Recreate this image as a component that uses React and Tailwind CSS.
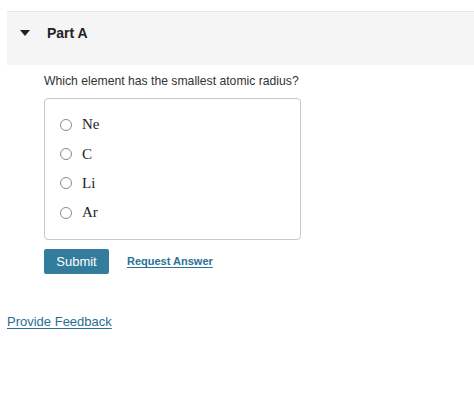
import React from "react";

const options = ["Ne", "C", "Li", "Ar"];

export default function App() {
    return (
        <div className="w-[474px] h-[420px] bg-white pt-[11px] font-['Liberation_Sans',Arial,sans-serif] text-[#222]">
            <div className="ml-[7px] h-[54px] bg-[#f5f5f5] border-t border-[#e6e6e6] flex items-start pt-[11px]">
                <div className="h-[20px] flex items-center">
                    <svg className="ml-[13px]" width="10" height="6" viewBox="0 0 10 6">
                        <path d="M0 0 L10 0 L5 6 Z" fill="#222" />
                    </svg>
                </div>
                <span className="ml-[17px] text-[14px] leading-[20px] font-bold text-[#222]">Part A</span>
            </div>
            <div className="ml-[44px]">
                <p className="mt-[7px] text-[12.2px] leading-[18px] text-[#333]">Which element has the smallest atomic radius?</p>
                <div className="mt-[8px] w-[257px] h-[142px] border border-[#c8c8c8] rounded-[4px] pt-[11px] pl-[15px]">
                    {options.map((o) => (
                        <label key={o} className="flex items-center h-[29.3px]">
                            <span className="w-[12px] h-[12px] rounded-full border border-[#8a8a8a] bg-white"></span>
                            <span className="ml-[10px] font-['Liberation_Serif','Times_New_Roman',serif] text-[15px] text-[#222]">{o}</span>
                        </label>
                    ))}
                </div>
                <div className="mt-[9px] flex items-center">
                    <button className="w-[65px] h-[25px] bg-[#337c9c] rounded-[2px] text-white text-[13px] leading-none">Submit</button>
                    <a href="#" className="ml-[18px] text-[11px] font-bold text-[#2a7196] underline underline-offset-2">Request Answer</a>
                </div>
            </div>
            <a href="#" className="block ml-[7px] mt-[38px] text-[13px] text-[#2a6e92] underline underline-offset-2">Provide Feedback</a>
        </div>
    );
}
